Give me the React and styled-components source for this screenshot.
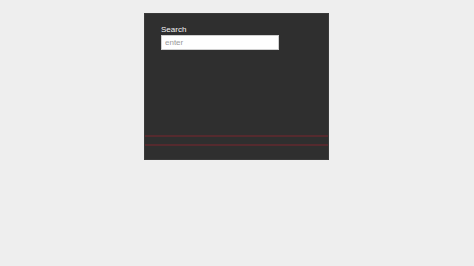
import styled, { createGlobalStyle } from 'styled-components';

const GlobalStyle = createGlobalStyle`
    body {
        margin: 0;
        background: #eeeeee;
        font-family: "Liberation Sans", Arial, sans-serif;
    }
`;

const Panel = styled.div`
    width: 185px;
    height: 147px;
    margin: 13px 0 0 calc(50% - 93px);
    background: #2f2f2f;
    box-sizing: border-box;
    border: 1px solid #3a3a3a;
    display: flex;
    flex-direction: column;
`;

const SearchBox = styled.div`
    display: flex;
    flex-direction: column;
    padding: 10px 0 0 16px;
`;

const Label = styled.label`
    color: #f4f4f4;
    font-size: 8px;
    line-height: 11px;
`;

const Input = styled.input`
    width: 118px;
    height: 15px;
    box-sizing: border-box;
    border: 1px solid #d0d0d0;
    outline: none;
    padding: 0 3px;
    font-family: "Liberation Sans", Arial, sans-serif;
    font-size: 8px;
    background: #ffffff;
    color: #333;

    &::placeholder {
        color: #9a9a9a;
    }
`;

const Strip = styled.div`
    margin-top: auto;
    margin-bottom: 13px;
    display: flex;
    flex-direction: column;
    gap: 7px;
`;

const Rule = styled.div`
    height: 2px;
    background: #552a2e;
`;

const App = () => {
    return (
        <>
            <GlobalStyle />
            <Panel>
                <SearchBox>
                    <Label htmlFor="search">Search</Label>
                    <Input id="search" type="text" placeholder="enter" />
                </SearchBox>
                <Strip>
                    <Rule />
                    <Rule />
                </Strip>
            </Panel>
        </>
    );
};

export default App;
